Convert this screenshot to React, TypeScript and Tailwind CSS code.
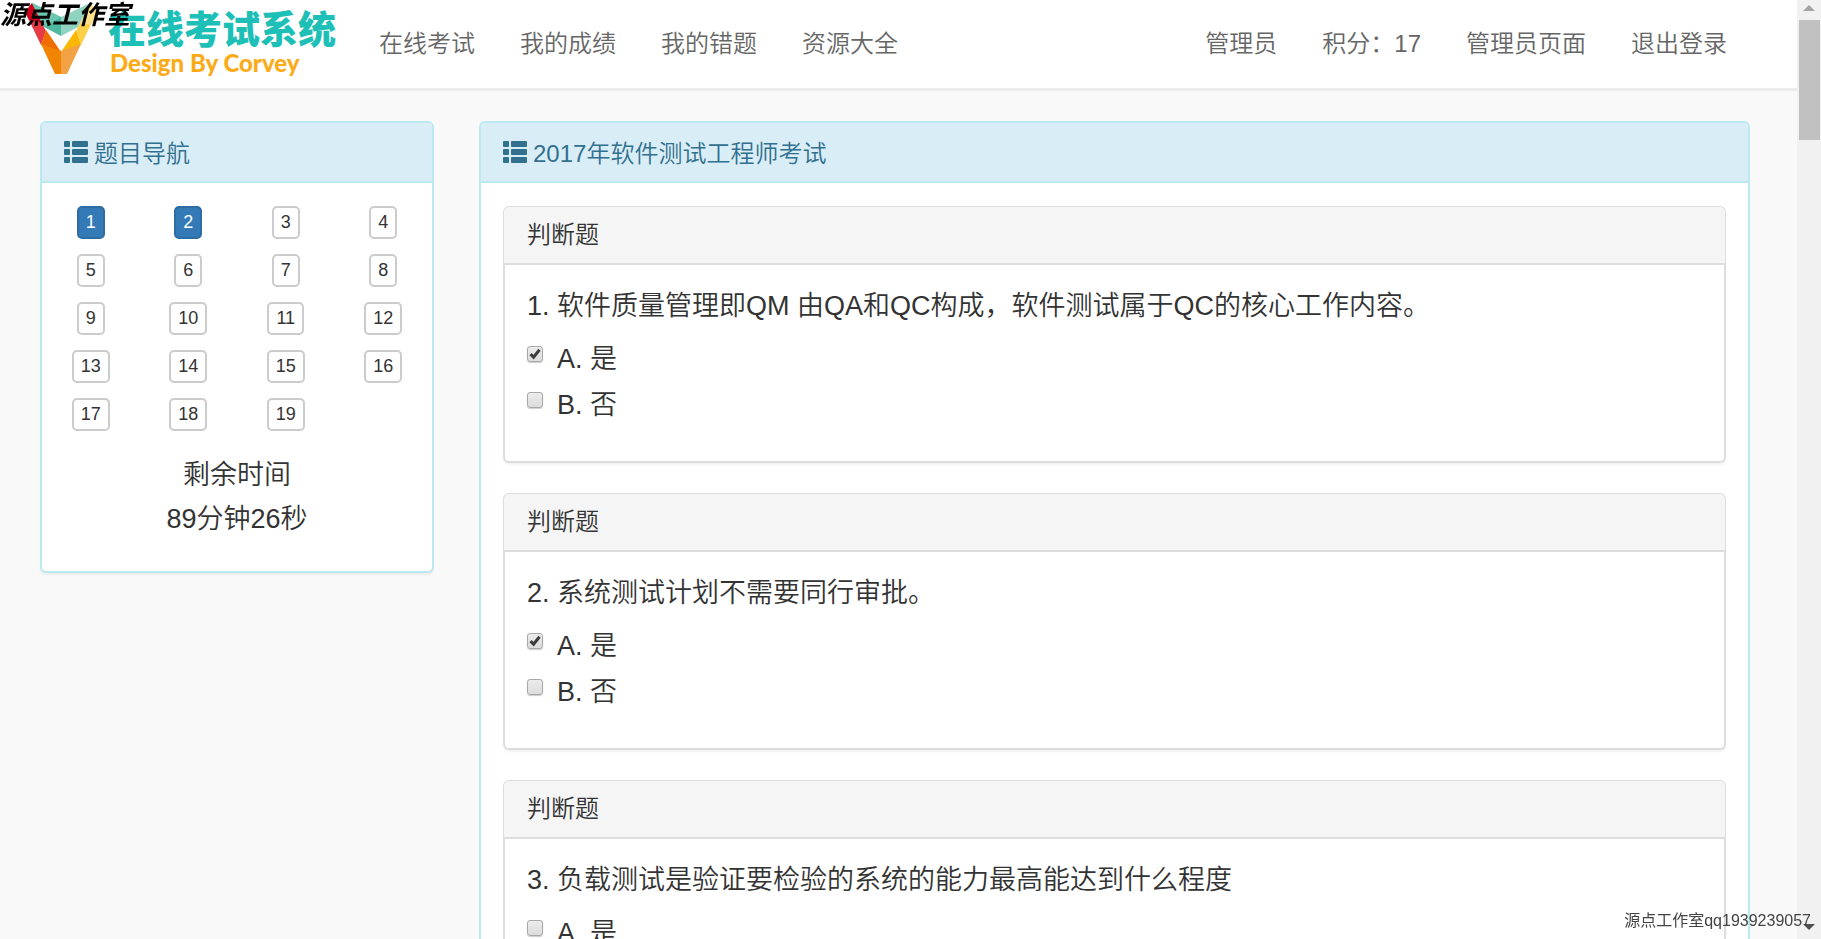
import { FC, useState } from "react";

interface IQuestion {
  id: number;
  title: string;
  answer?: string;
}

const navLinks = ["在线考试", "我的成绩", "我的错题", "资源大全"];
const userLinks = ["管理员", "积分：17", "管理员页面", "退出登录"];

const questions: IQuestion[] = [
  {
    id: 1,
    title: "软件质量管理即QM 由QA和QC构成，软件测试属于QC的核心工作内容。",
    answer: "A",
  },
  { id: 2, title: "系统测试计划不需要同行审批。", answer: "A" },
  { id: 3, title: "负载测试是验证要检验的系统的能力最高能达到什么程度" },
];

const options = [
  { key: "A", label: "是" },
  { key: "B", label: "否" },
];

const TOTAL = 19;

const Logo: FC = () => (
  <a href="#" className="flex items-center gap-2.5 pb-2.5">
    <svg viewBox="0 0 74 72" className="h-[72px] w-[74px]">
      <path d="M8 0L1 9L17 42L22 28L20 24Z" fill="#e63a45" />
      <path d="M8 0L1 9L5 17L18 20Z" fill="#d0021b" />
      <path d="M66 0L73 9L57 42L52 28L54 24Z" fill="#fdd04a" />
      <path d="M66 0L73 9L67 22L56 20Z" fill="#fde08a" />
      <path d="M8 0L37 14V33L20 24Z" fill="#4fb9a0" />
      <path d="M66 0L37 14V33L54 24Z" fill="#8fd3c0" />
      <path d="M8 0L37 14L20 24Z" fill="#6cc7b0" />
      <path d="M22 27L17 42L37 49Z" fill="#ef6c00" />
      <path d="M17 41L37 48V71H31Z" fill="#f28500" />
      <path d="M52 27L57 42L37 49Z" fill="#fbb800" />
      <path d="M57 41L37 48V71H43Z" fill="#f2a145" />
    </svg>
    <span className="flex flex-col pt-1.5">
      <span className="text-[38px] leading-[42px] font-black text-[#1dbfb6]">
        在线考试系统
      </span>
      <span className="pl-0.5 font-['Lato','Liberation_Sans',sans-serif] text-2xl leading-6 font-black text-[#fbab18]">
        Design By Corvey
      </span>
    </span>
  </a>
);

const ListIcon: FC = () => (
  <svg viewBox="0 0 24 22" className="h-[22px] w-6" fill="currentColor">
    <rect x="0" y="0" width="6" height="6" rx="1" />
    <rect x="8" y="0" width="16" height="6" rx="1" />
    <rect x="0" y="8" width="6" height="6" rx="1" />
    <rect x="8" y="8" width="16" height="6" rx="1" />
    <rect x="0" y="16" width="6" height="6" rx="1" />
    <rect x="8" y="16" width="16" height="6" rx="1" />
  </svg>
);

const PanelHeading: FC<{ title: string }> = ({ title }) => (
  <h2 className="flex h-[60px] items-center gap-1.5 border-b-2 border-[#bce8f1] bg-[#d9edf7] px-[22px] text-2xl text-[#31708f]">
    <ListIcon />
    <span className="pt-1">{title}</span>
  </h2>
);

const Question: FC<{ question: IQuestion }> = ({ question }) => {
  const [answer, setAnswer] = useState(question.answer);
  return (
    <article className="rounded-md shadow-[0_2px_2px_rgba(0,0,0,0.05)]">
      <h3 className="rounded-t-md border border-b-2 border-[#ddd] bg-[#f5f5f5] px-[23px] text-2xl leading-[56px]">
        判断题
      </h3>
      <div className="rounded-b-md border-2 border-t-0 border-[#ddd] px-[22px] pt-[22px] pb-[34px] text-[27px]">
        <p className="mb-2.5 leading-[38px]">
          {question.id}. {question.title}
        </p>
        {options.map(({ key, label }) => (
          <label key={key} className="flex h-[46px] gap-3.5 leading-[48px]">
            <span className="relative mt-[11px] size-4">
              <input
                type="checkbox"
                checked={answer === key}
                onChange={() => setAnswer(answer === key ? undefined : key)}
                className="peer block size-4 appearance-none rounded-[3px] border border-[#a8a8a8] bg-linear-to-b from-[#ececec] to-[#dcdcdc] shadow-[0_1px_1px_rgba(0,0,0,0.2)]"
              />
              <svg
                viewBox="0 0 16 16"
                className="pointer-events-none absolute inset-0 hidden size-4 peer-checked:block"
              >
                <path
                  d="M3.5 8.2L6.6 11.2L12.5 3.8"
                  fill="none"
                  stroke="#3c3c3c"
                  strokeWidth="3"
                />
              </svg>
            </span>
            {key}. {label}
          </label>
        ))}
      </div>
    </article>
  );
};

const Scrollbar: FC = () => (
  <div className="flex w-6 shrink-0 flex-col items-center justify-between bg-[#f1f1f1]">
    <div className="flex flex-col items-center">
      <svg viewBox="0 0 24 20" className="h-5 w-6">
        <path d="M6 11L12 5L18 11Z" fill="#a3a3a3" />
      </svg>
      <div className="h-[120px] w-[21px] bg-[#c1c1c1]" />
    </div>
    <svg viewBox="0 0 24 20" className="h-5 w-6">
      <path d="M6 5L12 11L18 5Z" fill="#505050" />
    </svg>
  </div>
);

const App: FC = () => {
  return (
    <div className="flex h-screen overflow-hidden bg-[#f9f9f9] font-['Liberation_Sans','Noto_Sans_CJK_SC',sans-serif] font-[350] text-[#333]">
      <div className="min-w-0 flex-1 overflow-hidden">
        <header className="flex h-[91px] items-center justify-between border-b-[3px] border-[#ececec] bg-white pr-[70px] pl-6">
          <div className="flex items-center gap-[43px]">
            <Logo />
            <nav className="flex gap-[45px] text-2xl text-[#666]">
              {navLinks.map((link) => (
                <a key={link} href="#">
                  {link}
                </a>
              ))}
            </nav>
          </div>
          <nav className="flex gap-[45px] text-2xl text-[#666]">
            {userLinks.map((link) => (
              <a key={link} href="#">
                {link}
              </a>
            ))}
          </nav>
        </header>

        <main className="flex items-start gap-[45px] pt-[30px] pr-[47px] pl-10">
          <section className="w-[394px] shrink-0 overflow-hidden rounded-md border-2 border-[#bce8f1] bg-white shadow-[0_2px_2px_rgba(0,0,0,0.05)]">
            <PanelHeading title="题目导航" />
            <div className="grid grid-cols-4 justify-items-center gap-y-[15px] pt-[23px]">
              {Array.from({ length: TOTAL }, (_, i) => i + 1).map((n) => (
                <button
                  key={n}
                  type="button"
                  className={
                    n <= 2
                      ? "h-[33px] rounded-[5px] border-2 border-[#2e6da4] bg-[#337ab7] px-[7px] pb-0.5 text-lg leading-7 text-white"
                      : "h-[33px] rounded-[5px] border-2 border-[#ccc] bg-white px-[7px] pb-0.5 text-lg leading-7"
                  }
                >
                  {n}
                </button>
              ))}
            </div>
            <div className="pt-[22px] pb-[30px] text-center text-[27px] leading-[44px]">
              <p>剩余时间</p>
              <p>89分钟26秒</p>
            </div>
          </section>

          <section className="min-w-0 flex-1 overflow-hidden rounded-md border-2 border-[#bce8f1] bg-white">
            <PanelHeading title="2017年软件测试工程师考试" />
            <div className="flex flex-col gap-[30px] px-[22px] py-[23px]">
              {questions.map((question) => (
                <Question key={question.id} question={question} />
              ))}
            </div>
          </section>
        </main>
      </div>
      <Scrollbar />

      <span className="fixed top-0 left-0 text-[26px] leading-[30px] font-bold text-black italic">
        源点工作室
      </span>
      <span className="fixed right-2.5 bottom-1.5 text-base leading-6 font-normal text-[#444]">
        源点工作室qq1939239057
      </span>
    </div>
  );
};

export default App;
